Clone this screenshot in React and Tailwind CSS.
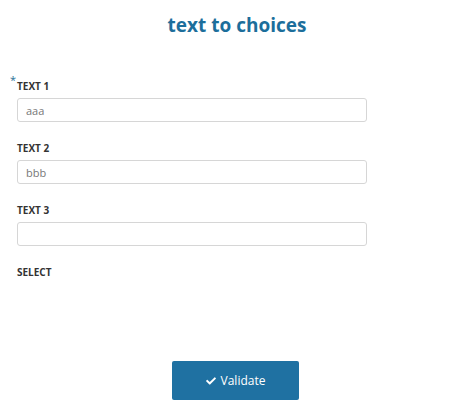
import { FaCheck } from "react-icons/fa";

const Field = ({ label, value, required }) => (
  <div className="flex flex-col">
    <label className="relative text-[10px] font-bold uppercase text-[#333] leading-none">
      {required && <span className="absolute -left-[7px] -top-[7px] text-[#2a6f97] text-[11px] font-normal">*</span>}
      {label}
    </label>
    <input
      readOnly
      value={value}
      className="mt-[7px] h-6 w-[350px] rounded-[3px] border border-[#d6d6d6] bg-white px-2 text-[11px] text-[#777] outline-none"
    />
  </div>
);

export default function App() {
  return (
    <div className="h-[410px] w-[474px] bg-white font-['Open_Sans',sans-serif]">
      <h1 className="pt-[11px] text-center text-[19px] font-bold leading-[28px] text-[#1c6e9b]">text to choices</h1>
      <div className="flex flex-col gap-[21px] pl-[17px] pt-[42px]">
        <Field label="Text 1" value="aaa" required />
        <Field label="Text 2" value="bbb" />
        <Field label="Text 3" value="" />
        <div className="text-[10px] font-bold uppercase text-[#333] leading-none">Select</div>
      </div>
      <div className="flex justify-center pr-[3px] pt-[84px]">
        <button className="flex h-[39px] w-[127px] items-center justify-center gap-[5px] rounded-[2px] bg-[#1f71a2] text-[12px] text-white">
          <FaCheck className="text-[10px]" />
          Validate
        </button>
      </div>
    </div>
  );
}
